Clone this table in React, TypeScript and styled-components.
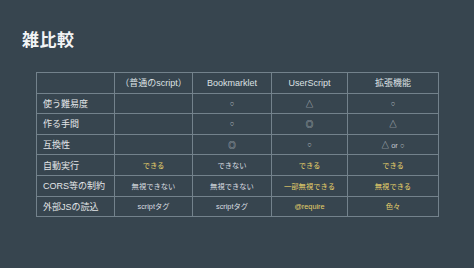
import styled, { createGlobalStyle } from 'styled-components';

const GlobalStyle = createGlobalStyle`
  html, body {
    margin: 0;
    padding: 0;
    background: #37454f;
  }
  body {
    font-family: 'Liberation Sans', 'Noto Sans CJK JP', sans-serif;
  }
`;

type Tone = 'plain' | 'yes';

interface Cell {
  text: string;
  tone?: Tone;
  mark?: boolean;
}

interface Row {
  label: string;
  cells: Cell[];
}

const headers = ['（普通のscript）', 'Bookmarklet', 'UserScript', '拡張機能'];

const rows: Row[] = [
  { label: '使う難易度', cells: [{ text: '' }, { text: '○', mark: true }, { text: '△', mark: true }, { text: '○', mark: true }] },
  { label: '作る手間', cells: [{ text: '' }, { text: '○', mark: true }, { text: '◎', mark: true }, { text: '△', mark: true }] },
  { label: '互換性', cells: [{ text: '' }, { text: '◎', mark: true }, { text: '○', mark: true }, { text: '△ or ○', mark: true }] },
  { label: '自動実行', cells: [{ text: 'できる', tone: 'yes' }, { text: 'できない' }, { text: 'できる', tone: 'yes' }, { text: 'できる', tone: 'yes' }] },
  { label: 'CORS等の制約', cells: [{ text: '無視できない' }, { text: '無視できない' }, { text: '一部無視できる', tone: 'yes' }, { text: '無視できる', tone: 'yes' }] },
  { label: '外部JSの読込', cells: [{ text: 'scriptタグ' }, { text: 'scriptタグ' }, { text: '@require', tone: 'yes' }, { text: '色々', tone: 'yes' }] },
];

const colWidths = [78, 78, 79, 76, 91];

export default function App() {
  return (
    <Page>
      <GlobalStyle />
      <Title>雑比較</Title>
      <Table>
        <colgroup>
          {colWidths.map((w, i) => (
            <col key={i} style={{ width: w }} />
          ))}
        </colgroup>
        <thead>
          <tr>
            <HeadCell />
            {headers.map(h => (
              <HeadCell key={h}>{h}</HeadCell>
            ))}
          </tr>
        </thead>
        <tbody>
          {rows.map(r => (
            <tr key={r.label}>
              <LabelCell>{r.label}</LabelCell>
              {r.cells.map((c, i) => (
                <BodyCell key={i} tone={c.tone ?? 'plain'}>
                  {c.mark ? <Mark>{c.text}</Mark> : c.text}
                </BodyCell>
              ))}
            </tr>
          ))}
        </tbody>
      </Table>
    </Page>
  );
}

const Page = styled.div`
  width: 474px;
  height: 268px;
  box-sizing: border-box;
  padding: 31px 0 0 22px;
  background: #37454f;
  overflow: hidden;
`;

const Title = styled.h1`
  margin: 0 0 21px 0;
  font-size: 17px;
  line-height: 20px;
  font-weight: 700;
  color: #f2f4f5;
  letter-spacing: 0.5px;
`;

const Table = styled.table`
  margin-left: 14px;
  border-collapse: collapse;
  table-layout: fixed;
  width: 403px;

  td, th {
    border: 1px solid #73828c;
    height: 20.6px;
    padding: 0;
    box-sizing: border-box;
  }
`;

const HeadCell = styled.th`
  font-size: 9px;
  font-weight: 400;
  color: #dde1e4;
  text-align: center;
  vertical-align: middle;
`;

const LabelCell = styled.td`
  font-size: 9px;
  color: #e3e6e8;
  text-align: left;
  padding-left: 6px !important;
  vertical-align: middle;
  white-space: nowrap;
`;

const BodyCell = styled.td<{ tone: Tone }>`
  font-size: 7.3px;
  color: ${p => (p.tone === 'yes' ? '#e6d06a' : '#d9dde0')};
  text-align: center;
  vertical-align: middle;
  white-space: nowrap;
`;

const Mark = styled.span`
  font-size: 7.5px;
  color: #c6ccd1;
`;
